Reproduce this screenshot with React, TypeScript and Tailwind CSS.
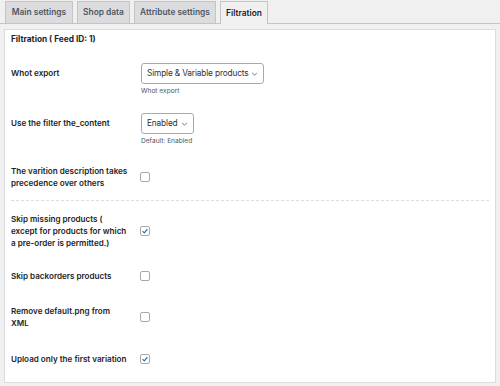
import { ReactNode } from 'react';

const tabs = [
  { label: 'Main settings', w: 'w-[68px]' },
  { label: 'Shop data', w: 'w-[53px]' },
  { label: 'Attribute settings', w: 'w-[82px]' },
];

const Check = ({ checked }: { checked?: boolean }) => (
  <span className="flex h-[10px] w-[10px] items-center justify-center rounded-[2px] border border-[#a7aaad] bg-white">
    {checked && (
      <svg viewBox="0 0 10 10" className="h-[8px] w-[8px]">
        <path d="M2 5.2 L4.1 7.3 L8 2.6" fill="none" stroke="#2271b1" strokeWidth="1.4" />
      </svg>
    )}
  </span>
);

const Select = ({ value, w }: { value: string; w: string }) => (
  <div className={`flex h-[21px] items-center justify-between whitespace-nowrap rounded-[3px] border border-[#a7aaad] bg-white pl-[5px] pr-[5px] text-[8.3px] tracking-[-0.15px] text-[#2c3338] ${w}`}>
    <span>{value}</span>
    <svg viewBox="0 0 8 5" className="h-[4px] w-[7px] shrink-0">
      <path d="M1 1 L4 4 L7 1" fill="none" stroke="#50575e" strokeWidth="1" />
    </svg>
  </div>
);

const Row = ({ label, children, className = '' }: { label: ReactNode; children: ReactNode; className?: string }) => (
  <div className={`flex items-center ${className}`}>
    <div className="w-[129px] text-[8.1px] font-semibold leading-[12px] text-[#1d2327]">{label}</div>
    {children}
  </div>
);

export default function App() {
  return (
    <div className="h-[386px] w-[500px] overflow-hidden bg-[#f0f0f1] font-['Inter',sans-serif]">
      <div className="flex items-end border-b border-[#c3c4c7] pl-[5px] pt-[1px]">
        {tabs.map((t) => (
          <div
            key={t.label}
            className={`mr-[4px] flex h-[22px] items-center justify-center border border-b-0 border-[#c3c4c7] bg-[#dcdcde] text-[8.4px] font-semibold text-[#50575e] ${t.w}`}
          >
            {t.label}
          </div>
        ))}
        <div className="-mb-px flex h-[23px] w-[48px] items-center justify-center border border-b-0 border-[#c3c4c7] bg-[#f0f0f1] text-[8.4px] font-semibold text-[#1d2327]">
          Filtration
        </div>
      </div>

      <div className="mx-[4px] mt-[5px] h-[354px] w-[492px] border border-[#dcdcde] bg-white pl-[6px] pr-[6px]">
        <div className="pt-[2px] text-[8.3px] font-bold leading-[14px] text-[#1d2327]">Filtration ( Feed ID: 1)</div>

        <div className="mt-[17px] flex items-start">
          <div className="w-[130px] text-[8.1px] font-semibold leading-[21px] text-[#1d2327]">Whot export</div>
          <div>
            <Select value="Simple & Variable products" w="w-[123px]" />
            <div className="mt-[2px] text-[6.6px] leading-[10px] text-[#50575e]">Whot export</div>
          </div>
        </div>

        <div className="mt-[17px] flex items-start">
          <div className="w-[130px] text-[8.1px] font-semibold leading-[21px] text-[#1d2327]">Use the filter the_content</div>
          <div>
            <Select value="Enabled" w="w-[53px]" />
            <div className="mt-[2px] text-[6.6px] leading-[10px] text-[#50575e]">Default: Enabled</div>
          </div>
        </div>

        <Row label={<>The varition description takes<br />precedence over others</>} className="mt-[19px]">
          <Check />
        </Row>

        <div className="mt-[11px] border-t border-dashed border-[#dcdcde]" />

        <Row
          label={<>Skip missing products (<br />except for products for which<br />a pre-order is permitted.)</>}
          className="mt-[12px]"
        >
          <Check checked />
        </Row>

        <Row label="Skip backorders products" className="mt-[21px]">
          <Check />
        </Row>

        <Row label={<>Remove default.png from<br />XML</>} className="mt-[23px]">
          <Check />
        </Row>

        <Row label="Upload only the first variation" className="mt-[24px]">
          <Check checked />
        </Row>
      </div>
    </div>
  );
}
